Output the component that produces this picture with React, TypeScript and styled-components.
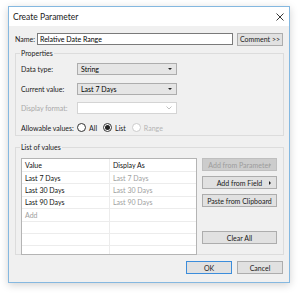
import styled, { createGlobalStyle } from 'styled-components'

const GlobalStyle = createGlobalStyle`
  html, body {
    margin: 0;
    padding: 0;
    background: #ffffff;
  }
  body {
    font-family: Lato, 'Noto Sans', sans-serif;
    font-size: 7px;
    color: #000000;
  }
  * {
    box-sizing: border-box;
  }
`

const Page = styled.div`
  width: 300px;
  height: 295px;
  padding-top: 6px;
  padding-left: 8px;
`

const Window = styled.div`
  width: 282px;
  height: 277px;
  border: 1px solid #85b8e0;
  background: #f0f0f0;
  box-shadow: 0px 2px 8px rgba(0, 0, 0, 0.18);
  display: flex;
  flex-direction: column;
`

const TitleBar = styled.div`
  height: 19px;
  background: #ffffff;
  display: flex;
  align-items: center;
  justify-content: space-between;
  padding-left: 4px;
  padding-right: 5px;
`

const Title = styled.span`
  font-size: 8.5px;
  color: #1a1a1a;
`

const Body = styled.div`
  flex: 1;
  padding: 6px 6px 0 6px;
  display: flex;
  flex-direction: column;
`

const NameRow = styled.div`
  display: flex;
  align-items: center;
  height: 14px;
`

const Label = styled.span<{ $width?: number; $disabled?: boolean }>`
  width: ${(p) => (p.$width ? `${p.$width}px` : 'auto')};
  flex-shrink: 0;
  color: ${(p) => (p.$disabled ? '#a8a8a8' : '#1a1a1a')};
  white-space: nowrap;
`

const TextInput = styled.div`
  width: 196px;
  height: 12px;
  border: 1px solid #7a7a7a;
  background: #ffffff;
  display: flex;
  align-items: center;
  padding-left: 2px;
  margin-right: 4px;
`

const Button = styled.div<{ $width: number; $disabled?: boolean; $default?: boolean }>`
  width: ${(p) => p.$width}px;
  height: 13px;
  flex-shrink: 0;
  border: 1px solid ${(p) => (p.$default ? '#3c8ddb' : p.$disabled ? '#bfbfbf' : '#adadad')};
  background: ${(p) => (p.$disabled ? '#cccccc' : '#e1e1e1')};
  color: ${(p) => (p.$disabled ? '#9c9c9c' : '#1a1a1a')};
  display: flex;
  align-items: center;
  justify-content: center;
  position: relative;
  white-space: nowrap;
`

const MenuArrow = styled.span<{ $disabled?: boolean }>`
  position: absolute;
  right: 5px;
  top: 3.5px;
  width: 0;
  height: 0;
  border-top: 2px solid transparent;
  border-bottom: 2px solid transparent;
  border-left: 2.5px solid ${(p) => (p.$disabled ? '#a8a8a8' : '#222222')};
`

const Group = styled.fieldset<{ $height: number; $top: number }>`
  margin: ${(p) => p.$top}px -1px 0 0;
  padding: 0 6px 0 5px;
  height: ${(p) => p.$height}px;
  border: 1px solid #dcdcdc;
  min-width: 0;
`

const Legend = styled.legend`
  padding: 0 1px;
  margin-left: -1px;
  color: #1a1a1a;
  line-height: 8px;
`

const PropRows = styled.div`
  display: flex;
  flex-direction: column;
  gap: 7.5px;
  padding-top: 6px;
`

const PropRow = styled.div`
  display: flex;
  align-items: center;
  height: 12px;
`

const Select = styled.div<{ $disabled?: boolean }>`
  width: 100px;
  height: 12px;
  border: 1px solid ${(p) => (p.$disabled ? '#d4d4d4' : '#adadad')};
  background: ${(p) => (p.$disabled ? '#ffffff' : '#e5e5e5')};
  display: flex;
  align-items: center;
  justify-content: space-between;
  padding-left: 3px;
  padding-right: 4px;
`

const DropArrow = styled.span`
  width: 0;
  height: 0;
  border-left: 2px solid transparent;
  border-right: 2px solid transparent;
  border-top: 2.5px solid #222222;
`

const RadioGroup = styled.div`
  display: flex;
  align-items: center;
  gap: 6px;
`

const RadioItem = styled.label<{ $disabled?: boolean }>`
  display: flex;
  align-items: center;
  gap: 3px;
  color: ${(p) => (p.$disabled ? '#b4b4b4' : '#1a1a1a')};
`

const RadioCircle = styled.span<{ $checked?: boolean; $disabled?: boolean }>`
  width: 9px;
  height: 9px;
  border-radius: 50%;
  border: 1px solid ${(p) => (p.$disabled ? '#cccccc' : '#333333')};
  background: #ffffff;
  display: flex;
  align-items: center;
  justify-content: center;

  &::after {
    content: '';
    display: ${(p) => (p.$checked ? 'block' : 'none')};
    width: 5px;
    height: 5px;
    border-radius: 50%;
    background: #222222;
  }
`

const ListArea = styled.div`
  display: flex;
  justify-content: space-between;
  padding-top: 7px;
`

const Table = styled.div`
  width: 176px;
  height: 97px;
  border: 1px solid #b4b4b4;
  background: #ffffff;
  display: grid;
  grid-template-columns: 87px 1fr;
  grid-template-rows: 13px;
  grid-auto-rows: 12.4px;
  overflow: hidden;
`

const Cell = styled.div<{ $muted?: boolean }>`
  border-bottom: 1px solid #ececec;
  display: flex;
  align-items: center;
  padding-left: 3px;
  color: ${(p) => (p.$muted ? '#a0a0a0' : '#111111')};
  white-space: nowrap;

  &:nth-child(2n) {
    border-left: 1px solid #ececec;
  }
`

const SideButtons = styled.div`
  display: flex;
  flex-direction: column;
  gap: 5px;
`

const Spacer = styled.div<{ $h: number }>`
  height: ${(p) => p.$h}px;
`

const Footer = styled.div`
  display: flex;
  justify-content: flex-end;
  gap: 5px;
  padding-top: 6px;
`

const CloseIcon = () => (
  <svg width='8' height='8' viewBox='0 0 8 8'>
    <path d='M0.5 0.5 L7.5 7.5 M7.5 0.5 L0.5 7.5' stroke='#222' strokeWidth='0.9' />
  </svg>
)

const Chevron = () => (
  <svg width='6' height='4' viewBox='0 0 6 4'>
    <path d='M0.5 0.5 L3 3 L5.5 0.5' stroke='#b0b0b0' strokeWidth='0.8' fill='none' />
  </svg>
)

const rows = [
  { value: 'Last 7 Days', display: 'Last 7 Days' },
  { value: 'Last 30 Days', display: 'Last 30 Days' },
  { value: 'Last 90 Days', display: 'Last 90 Days' },
]

const App = () => (
  <Page>
    <GlobalStyle />
    <Window>
      <TitleBar>
        <Title>Create Parameter</Title>
        <CloseIcon />
      </TitleBar>
      <Body>
        <NameRow>
          <Label $width={22}>Name:</Label>
          <TextInput>Relative Date Range</TextInput>
          <Button $width={46}>Comment &gt;&gt;</Button>
        </NameRow>

        <Group $top={3} $height={87}>
          <Legend>Properties</Legend>
          <PropRows>
            <PropRow>
              <Label $width={56}>Data type:</Label>
              <Select>
                String
                <DropArrow />
              </Select>
            </PropRow>
            <PropRow>
              <Label $width={56}>Current value:</Label>
              <Select>
                Last 7 Days
                <DropArrow />
              </Select>
            </PropRow>
            <PropRow>
              <Label $width={56} $disabled>
                Display format:
              </Label>
              <Select $disabled>
                <span />
                <Chevron />
              </Select>
            </PropRow>
            <PropRow>
              <Label $width={56}>Allowable values:</Label>
              <RadioGroup>
                <RadioItem>
                  <RadioCircle />
                  All
                </RadioItem>
                <RadioItem>
                  <RadioCircle $checked />
                  List
                </RadioItem>
                <RadioItem $disabled>
                  <RadioCircle $disabled />
                  Range
                </RadioItem>
              </RadioGroup>
            </PropRow>
          </PropRows>
        </Group>

        <Group $top={7} $height={112}>
          <Legend>List of values</Legend>
          <ListArea>
            <Table>
              <Cell>Value</Cell>
              <Cell>Display As</Cell>
              {rows.map((r) => [
                <Cell key={r.value + 'v'}>{r.value}</Cell>,
                <Cell key={r.value + 'd'} $muted>
                  {r.display}
                </Cell>,
              ])}
              <Cell $muted>Add</Cell>
              <Cell />
              <Cell />
              <Cell />
              <Cell />
              <Cell />
              <Cell />
              <Cell />
              <Cell />
              <Cell />
            </Table>
            <SideButtons>
              <Button $width={75} $disabled>
                Add from Parameter
                <MenuArrow $disabled />
              </Button>
              <Button $width={75}>
                Add from Field
                <MenuArrow />
              </Button>
              <Button $width={75}>Paste from Clipboard</Button>
              <Spacer $h={14} />
              <Button $width={75}>Clear All</Button>
            </SideButtons>
          </ListArea>
        </Group>

        <Footer>
          <Button $width={46} $default>
            OK
          </Button>
          <Button $width={46}>Cancel</Button>
        </Footer>
      </Body>
    </Window>
  </Page>
)

export default App
